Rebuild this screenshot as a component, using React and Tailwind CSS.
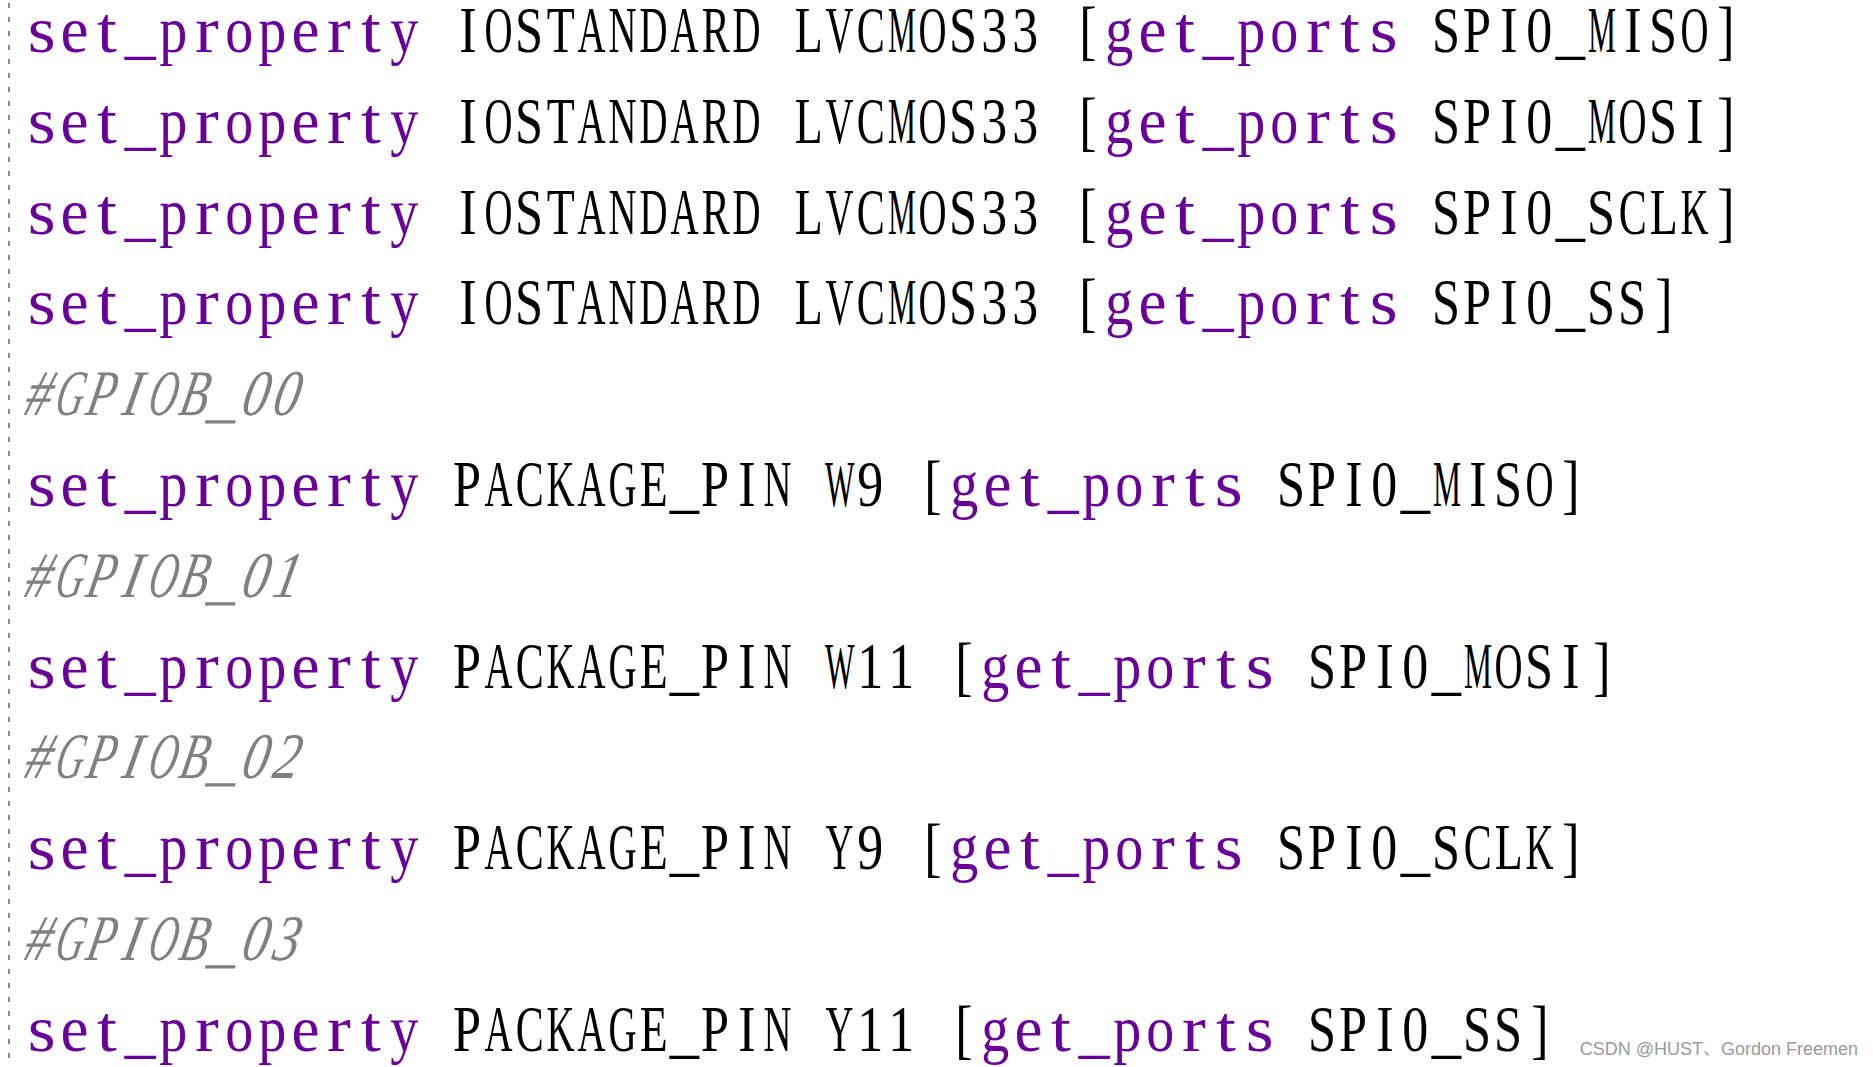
import React from 'react';

// one row = list of [kind, text]; k = keyword, t = plain, c = comment
const rows = [
  [['k', 'set_property'], ['t', ' IOSTANDARD LVCMOS33 ['], ['k', 'get_ports'], ['t', ' SPI0_MISO]']],
  [['k', 'set_property'], ['t', ' IOSTANDARD LVCMOS33 ['], ['k', 'get_ports'], ['t', ' SPI0_MOSI]']],
  [['k', 'set_property'], ['t', ' IOSTANDARD LVCMOS33 ['], ['k', 'get_ports'], ['t', ' SPI0_SCLK]']],
  [['k', 'set_property'], ['t', ' IOSTANDARD LVCMOS33 ['], ['k', 'get_ports'], ['t', ' SPI0_SS]']],
  [['c', '#GPIOB_00']],
  [['k', 'set_property'], ['t', ' PACKAGE_PIN W9 ['], ['k', 'get_ports'], ['t', ' SPI0_MISO]']],
  [['c', '#GPIOB_01']],
  [['k', 'set_property'], ['t', ' PACKAGE_PIN W11 ['], ['k', 'get_ports'], ['t', ' SPI0_MOSI]']],
  [['c', '#GPIOB_02']],
  [['k', 'set_property'], ['t', ' PACKAGE_PIN Y9 ['], ['k', 'get_ports'], ['t', ' SPI0_SCLK]']],
  [['c', '#GPIOB_03']],
  [['k', 'set_property'], ['t', ' PACKAGE_PIN Y11 ['], ['k', 'get_ports'], ['t', ' SPI0_SS]']],
];

// glyph widths, so every char can be squeezed into its fixed cell
let ctx;
const widths = {};
const glyphWidth = (ch, italic) => {
  const key = (italic ? 'i' : 'n') + ch;
  if (widths[key] === undefined) {
    if (!ctx) ctx = document.createElement('canvas').getContext('2d');
    ctx.font = `${italic ? 'italic ' : ''}65px "Liberation Serif", serif`;
    widths[key] = ctx.measureText(ch).width;
  }
  return widths[key];
};

// keywords are lowercase and heavier, plain text / comments are condensed caps
const transformFor = (ch, kind) => {
  const italic = kind === 'c';
  let s;
  if (ch === '_') s = kind === 'k' ? 0.95 : 0.9;
  else {
    const w = glyphWidth(ch, italic) || 1;
    s = kind === 'k'
      ? Math.max(0.6, Math.min(1.1, 28 / w))
      : Math.max(0.48, Math.min(0.8, 28 / w));
  }
  return italic ? `skewX(-12deg) scaleX(${s})` : `scaleX(${s})`;
};

const Chars = ({ kind, text }) =>
  text.split('').map((ch, i) => (
    <span
      key={i}
      className={kind === 'k' ? 'inline-flex w-[33px] justify-center' : 'inline-flex w-[31px] justify-center'}
    >
      <span className="inline-block whitespace-pre" style={{ transform: transformFor(ch, kind) }}>
        {ch}
      </span>
    </span>
  ));

const colorOf = {
  k: 'text-[#680099]',
  t: 'text-black',
  c: 'text-[#808080] italic',
};

export default function App() {
  return (
    <div className="relative flex h-screen w-full overflow-hidden bg-white">
      <div className="ml-[8px] mt-[3px] w-[2px] shrink-0 bg-[repeating-linear-gradient(to_bottom,#8c8c8c_0px,#8c8c8c_5px,transparent_5px,transparent_14px)]" />

      <div className="-mt-[15px] ml-[15px] [font-family:'Liberation_Serif',serif] text-[65px]">
        {rows.map((row, i) => (
          <div key={i} className="h-[90.8px] whitespace-nowrap leading-[90.8px]">
            {row.map(([kind, text], j) => (
              <span key={j} className={colorOf[kind]}>
                <Chars kind={kind} text={text} />
              </span>
            ))}
          </div>
        ))}
      </div>

      <div className="absolute bottom-[9px] right-[15px] [font-family:'Liberation_Sans','Noto_Sans_CJK_SC',sans-serif] text-[18px] leading-none text-[#9a9a9a]">
        CSDN @HUST、Gordon Freemen
      </div>
    </div>
  );
}
